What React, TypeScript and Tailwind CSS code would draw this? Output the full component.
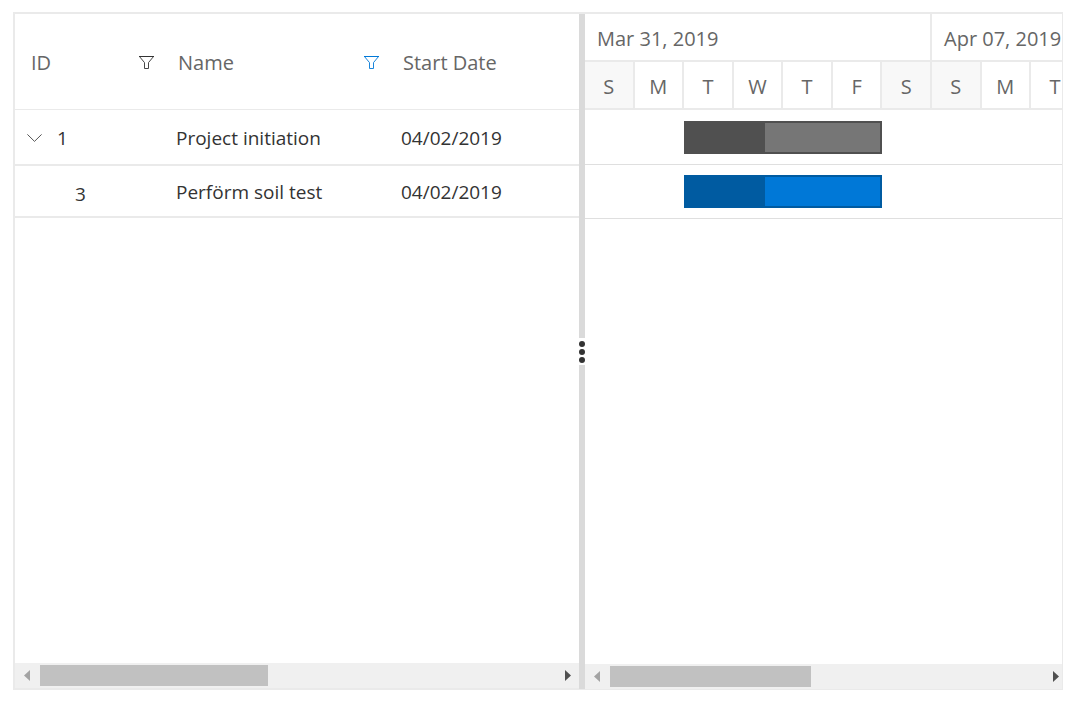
import { useState } from "react";

type Task = {
  id: number;
  name: string;
  start: string;
  parent?: boolean;
  offset: number;
  duration: number;
  progress: number;
};

// offset and duration are pixels on the timeline
const tasks: Task[] = [
  { id: 1, name: "Project initiation", start: "04/02/2019", parent: true, offset: 99, duration: 198, progress: 40.5 },
  { id: 3, name: "Perförm soil test", start: "04/02/2019", offset: 99, duration: 198, progress: 40.5 },
];

const weeks = [
  { label: "Mar 31, 2019", days: ["S", "M", "T", "W", "T", "F", "S"] },
  { label: "Apr 07, 2019", days: ["S", "M", "T"] },
];

function FilterIcon() {
  return (
    <svg width="15" height="13" viewBox="0 0 15 13" fill="none" stroke="currentColor">
      <path d="M0 .5h15" />
      <path d="M.7 .8L5.5 6.6V12.5H9.5V6.6L14.3 .8" strokeWidth="0.9" />
    </svg>
  );
}

function HeaderCell({ label, filter }: { label: string; filter?: "idle" | "active" }) {
  return (
    <th scope="col" className="h-24 border-b border-[#eaeaea] p-0 text-left font-normal text-[#666]">
      <div className="flex items-center justify-between pl-4 pr-2 pt-0.5">
        <span className="whitespace-nowrap">{label}</span>
        {filter && (
          <button
            type="button"
            aria-label={`Filter ${label}`}
            className={filter === "active" ? "text-[#0078d7]" : "text-[#333]"}
          >
            <FilterIcon />
          </button>
        )}
      </div>
    </th>
  );
}

function ScrollBar({ thumb, clipped }: { thumb: number; clipped?: boolean }) {
  return (
    <div className="flex h-[25px] shrink-0 items-center bg-[#f0f0f0]">
      <button type="button" aria-label="Scroll left" className="w-[25px] shrink-0 pl-[9px] text-[#a3a3a3]">
        <svg width="6" height="11" viewBox="0 0 6 11" fill="currentColor">
          <path d="M6 0v11L0 5.5z" />
        </svg>
      </button>
      <div className="min-w-0 flex-1">
        <div className="h-[21px] bg-[#c1c1c1]" style={{ width: `${thumb}%` }} />
      </div>
      <button
        type="button"
        aria-label="Scroll right"
        className={`flex w-[25px] shrink-0 justify-end text-[#505050] ${clipped ? "pr-[3px]" : "pr-2"}`}
      >
        <svg width="6" height="11" viewBox="0 0 6 11" fill="currentColor">
          <path d="M0 0v11l6-5.5z" />
        </svg>
      </button>
    </div>
  );
}

function TaskGrid({ open, onToggle }: { open: boolean; onToggle: () => void }) {
  const rows = tasks.filter((t) => open || t.parent);
  return (
    <div className="flex min-w-0 flex-col border-b border-[#eaeaea]">
      <div className="min-h-0 flex-1 overflow-hidden">
        <table className="w-full table-fixed border-separate border-spacing-0">
          <colgroup>
            <col className="w-[147px]" />
            <col className="w-[225px]" />
            <col />
          </colgroup>
          <thead>
            <tr>
              <HeaderCell label="ID" filter="idle" />
              <HeaderCell label="Name" filter="active" />
              <HeaderCell label="Start Date" />
            </tr>
          </thead>
          <tbody className="text-[19px] leading-6 text-[#333]">
            {rows.map((t) => (
              <tr key={t.id} className={t.parent ? "h-14" : "h-[52px]"}>
                <td className="border-b-2 border-[#eaeaea] px-0 pb-0 pt-0.5">
                  {t.parent ? (
                    <div className="flex items-center gap-[15px] pl-3">
                      <button type="button" aria-label="Toggle subtasks" aria-expanded={open} onClick={onToggle}>
                        <svg width="15" height="8" viewBox="0 0 15 8" fill="none" stroke="#555">
                          <path d="M.4 .4l7.1 7 7.1-7" />
                        </svg>
                      </button>
                      <span>{t.id}</span>
                    </div>
                  ) : (
                    <div className="pl-[60px] pt-1">{t.id}</div>
                  )}
                </td>
                <td className="whitespace-nowrap border-b-2 border-[#eaeaea] px-3.5 pb-0 pt-0.5">{t.name}</td>
                <td className="whitespace-nowrap border-b-2 border-[#eaeaea] px-3.5 pb-0 pt-0.5">{t.start}</td>
              </tr>
            ))}
          </tbody>
        </table>
      </div>
      <ScrollBar thumb={44.4} />
    </div>
  );
}

function Timeline({ open }: { open: boolean }) {
  const rows = tasks.filter((t) => open || t.parent);
  return (
    <div className="flex min-w-0 flex-col overflow-hidden">
      <div className="flex text-[#666]">
        {weeks.map((week) => (
          <div key={week.label} className="w-[347px] shrink-0">
            <div className="flex h-12 items-center whitespace-nowrap border-b-2 border-r-2 border-[#eaeaea] pl-3 pt-[3px]">
              {week.label}
            </div>
            <div className="grid grid-cols-7">
              {week.days.map((d, i) => (
                <div
                  key={i}
                  className={`flex h-12 items-center justify-center border-b-2 border-r-2 border-[#eaeaea] pt-[3px] ${
                    i === 0 || i === 6 ? "bg-[#f8f8f8]" : "bg-white"
                  }`}
                >
                  {d}
                </div>
              ))}
            </div>
          </div>
        ))}
      </div>
      <div className="min-h-0 flex-1">
        {rows.map((t) => (
          <div
            key={t.id}
            className={`flex items-end border-b border-[#dfdfdf] pb-2.5 ${t.parent ? "h-[55px]" : "h-[54px]"}`}
          >
            <div
              role="img"
              aria-label={t.name}
              className={`h-[33px] border-2 ${
                t.parent ? "border-[#505050] bg-[#767676]" : "border-[#005ba1] bg-[#0078d7]"
              }`}
              style={{ marginLeft: t.offset, width: t.duration }}
            >
              <div
                className={`h-full ${t.parent ? "bg-[#505050]" : "bg-[#005ba1]"}`}
                style={{ width: `${t.progress}%` }}
              />
            </div>
          </div>
        ))}
      </div>
      <ScrollBar thumb={47.1} clipped />
    </div>
  );
}

export default function App() {
  const [open, setOpen] = useState(true);

  return (
    <div className="flex h-screen bg-white pb-[11px] pl-[13px] pr-3.5 pt-3 font-['Open_Sans','Noto_Sans',sans-serif] text-xl/6">
      <main className="grid min-w-0 flex-1 grid-cols-[564fr_6px_477fr] border-b border-l-2 border-r border-t-2 border-[#eaeaea]">
        <TaskGrid open={open} onToggle={() => setOpen(!open)} />
        <div role="separator" aria-orientation="vertical" className="flex flex-col justify-center bg-[#dadada]">
          <div className="flex h-[27px] flex-col items-center justify-center gap-0.5 bg-white">
            <span className="size-1.5 rounded-full bg-[#333]" />
            <span className="size-1.5 rounded-full bg-[#333]" />
            <span className="size-1.5 rounded-full bg-[#333]" />
          </div>
        </div>
        <Timeline open={open} />
      </main>
    </div>
  );
}
